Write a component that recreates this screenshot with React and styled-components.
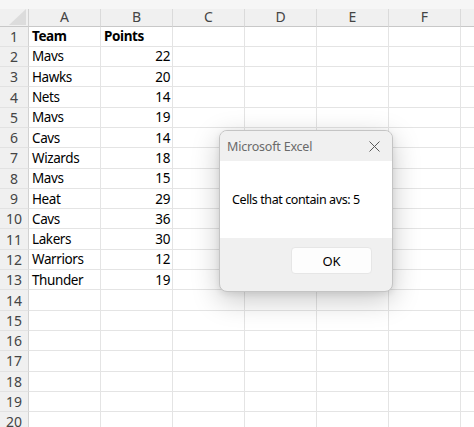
import React from "react";
import styled, { createGlobalStyle } from "styled-components";

const GlobalStyle = createGlobalStyle`
  html, body {
    margin: 0;
    padding: 0;
    background: #ffffff;
    overflow: hidden;
  }
  body {
    font-family: "Noto Sans", "Open Sans", sans-serif;
  }
`;

const columns = ["A", "B", "C", "D", "E", "F", ""];

const data = [
  ["Team", "Points", true],
  ["Mavs", 22],
  ["Hawks", 20],
  ["Nets", 14],
  ["Mavs", 19],
  ["Cavs", 14],
  ["Wizards", 18],
  ["Mavs", 15],
  ["Heat", 29],
  ["Cavs", 36],
  ["Lakers", 30],
  ["Warriors", 12],
  ["Thunder", 19],
];

const TOTAL_ROWS = 20;

const Page = () => {
  return (
    <>
      <GlobalStyle />
      <Screen>
        <TopStrip />
        <Sheet>
          <Corner>
            <svg width="17" height="16" viewBox="0 0 17 16">
              <polygon points="17,0 17,16 0,16" fill="#dcdcdc" />
            </svg>
          </Corner>
          {columns.map((c, i) => (
            <ColHeader key={i}>{c}</ColHeader>
          ))}
          {Array.from({ length: TOTAL_ROWS }).map((_, r) => {
            const row = data[r];
            return (
              <React.Fragment key={r}>
                <RowHeader>{r + 1}</RowHeader>
                {columns.map((_, c) => {
                  let content = "";
                  let align = "left";
                  if (row && c === 0) content = row[0];
                  if (row && c === 1) {
                    content = row[1];
                    align = row[2] ? "left" : "right";
                  }
                  return (
                    <Cell key={c} $align={align} $bold={row && row[2]}>
                      {content}
                    </Cell>
                  );
                })}
              </React.Fragment>
            );
          })}
        </Sheet>
        <Dialog>
          <TitleBar>
            <Title>Microsoft Excel</Title>
            <CloseButton>
              <svg width="11" height="11" viewBox="0 0 11 11">
                <path
                  d="M0.5 0.5 L10.5 10.5 M10.5 0.5 L0.5 10.5"
                  stroke="#5a5a5a"
                  strokeWidth="1"
                  fill="none"
                />
              </svg>
            </CloseButton>
          </TitleBar>
          <Body>Cells that contain avs: 5</Body>
          <Footer>
            <OkButton>OK</OkButton>
          </Footer>
        </Dialog>
      </Screen>
    </>
  );
};

export default Page;

const Screen = styled.div`
  position: relative;
  width: 474px;
  height: 427px;
  overflow: hidden;
  background: #ffffff;
`;

const TopStrip = styled.div`
  height: 9px;
  background: #f6f6f6;
`;

const Sheet = styled.div`
  display: grid;
  grid-template-columns: 29px repeat(7, 72px);
  grid-template-rows: 17.5px repeat(${TOTAL_ROWS}, 20.3px);
`;

const Corner = styled.div`
  background: #f0f0f0;
  border-right: 1px solid #d2d2d2;
  border-bottom: 1px solid #c8c8c8;
  display: flex;
  align-items: flex-end;
  justify-content: flex-end;
  padding: 0 2px 1px 0;
  box-sizing: border-box;
`;

const ColHeader = styled.div`
  background: #f0f0f0;
  border-right: 1px solid #dadada;
  border-bottom: 1px solid #c8c8c8;
  box-sizing: border-box;
  color: #444444;
  font-size: 14px;
  line-height: 16px;
  text-align: center;
`;

const RowHeader = styled.div`
  background: #f0f0f0;
  border-right: 1px solid #d2d2d2;
  border-bottom: 1px solid #e2e2e2;
  box-sizing: border-box;
  color: #444444;
  font-size: 14px;
  display: flex;
  align-items: center;
  justify-content: center;
`;

const Cell = styled.div`
  border-right: 1px solid #e4e4e4;
  border-bottom: 1px solid #e4e4e4;
  box-sizing: border-box;
  color: #000000;
  font-size: 13.5px;
  letter-spacing: -0.4px;
  font-weight: ${(p) => (p.$bold ? 700 : 400)};
  display: flex;
  align-items: center;
  justify-content: ${(p) => (p.$align === "right" ? "flex-end" : "flex-start")};
  padding: 0 2px 0 3px;
  white-space: nowrap;
`;

const Dialog = styled.div`
  position: absolute;
  left: 219px;
  top: 130px;
  width: 174px;
  height: 162px;
  box-sizing: border-box;
  border: 1px solid #c4c4c4;
  border-radius: 8px;
  background: #f0f0f0;
  box-shadow: 0 8px 28px rgba(0, 0, 0, 0.22), 0 2px 6px rgba(0, 0, 0, 0.08);
  display: flex;
  flex-direction: column;
  overflow: hidden;
`;

const TitleBar = styled.div`
  height: 30px;
  display: flex;
  align-items: center;
  justify-content: space-between;
  padding: 0 12px 0 7px;
  background: #f0f0f0;
`;

const Title = styled.span`
  color: #6a6a6a;
  font-size: 12.5px;
  letter-spacing: -0.2px;
`;

const CloseButton = styled.div`
  display: flex;
  align-items: center;
`;

const Body = styled.div`
  height: 77px;
  background: #ffffff;
  display: flex;
  align-items: center;
  padding-left: 12px;
  font-size: 12.5px;
  letter-spacing: -0.4px;
  color: #000000;
`;

const Footer = styled.div`
  flex: 1;
  display: flex;
  align-items: flex-start;
  justify-content: flex-end;
  padding: 9px 20px 0 0;
`;

const OkButton = styled.div`
  width: 81px;
  height: 27px;
  box-sizing: border-box;
  background: #fdfdfd;
  border: 1px solid #e6e6e6;
  border-radius: 4px;
  display: flex;
  align-items: center;
  justify-content: center;
  font-size: 13px;
  color: #000000;
`;
